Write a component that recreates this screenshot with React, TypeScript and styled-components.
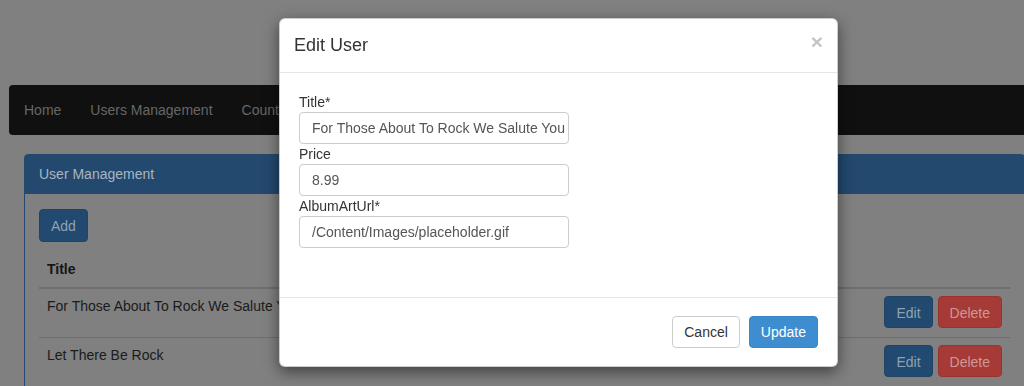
import styled, { createGlobalStyle } from 'styled-components';

const GlobalStyle = createGlobalStyle`
  html, body {
    margin: 0;
    padding: 0;
    overflow: hidden;
  }

  body {
    background: #808080;
    font-family: "Liberation Sans", Arial, Helvetica, sans-serif;
    font-size: 14px;
    line-height: 20px;
    color: #1b1b1b;
  }

  * {
    box-sizing: border-box;
  }
`;

/* page behind the backdrop, painted in its dimmed colours */
const Page = styled.div`
  width: 1040px;
  height: 386px;
  padding-top: 85px;
  background: #808080;
`;

const Navbar = styled.nav`
  display: flex;
  height: 50px;
  margin-left: 9px;
  background: #101010;
  border-radius: 4px 0 0 4px;
`;

const NavLink = styled.a`
  display: block;
  padding: 15px 14px 15px 15px;
  color: #676767;
  text-decoration: none;
`;

const Container = styled.div`
  padding: 19px 15px 0 24px;
`;

const Panel = styled.section`
  border: 1px solid #23496e;
  border-radius: 4px 4px 0 0;
`;

const PanelHeading = styled.div`
  height: 39px;
  padding: 9px 14px 10px;
  background: #23496e;
  color: #a9b5c2;
`;

const PanelBody = styled.div`
  padding: 15px 14px;
`;

const Button = styled.button<{ $variant: 'primary' | 'danger' }>`
  display: inline-block;
  height: 33px;
  padding: 6px 11px;
  border: 1px solid ${(p) => (p.$variant === 'primary' ? '#1f4465' : '#983532')};
  border-radius: 4px;
  background: ${(p) => (p.$variant === 'primary' ? '#22496f' : '#a63a37')};
  color: ${(p) => (p.$variant === 'primary' ? '#8fa2b5' : '#cf9895')};
  font: inherit;
`;

const Table = styled.table`
  width: 100%;
  margin-top: 9px;
  border-collapse: collapse;
`;

const Th = styled.th`
  padding: 8px;
  text-align: left;
  font-weight: bold;
  color: #161616;
  border-bottom: 2px solid #6e6e6e;
`;

const Td = styled.td<{ $actions?: boolean }>`
  padding: 7px 8px 9px;
  vertical-align: top;
  white-space: nowrap;
  border-top: 1px solid #6e6e6e;
  width: ${(p) => (p.$actions ? '1%' : 'auto')};
  color: #1b1b1b;
`;

const Actions = styled.div`
  display: flex;
  gap: 5px;
  margin-top: 0;
`;

const RowButton = styled(Button)`
  height: 32px;
`;

/* modal */
const Modal = styled.div`
  position: fixed;
  top: 18px;
  left: 279px;
  width: 559px;
  background: #fff;
  border: 1px solid rgba(0, 0, 0, 0.2);
  border-radius: 6px;
  box-shadow: 0 5px 15px rgba(0, 0, 0, 0.5);
  color: #333;
`;

const ModalHeader = styled.div`
  display: flex;
  justify-content: space-between;
  align-items: flex-start;
  padding: 14px;
  border-bottom: 1px solid #e5e5e5;
`;

const ModalTitle = styled.h4`
  margin: 0;
  font-size: 18px;
  font-weight: normal;
  line-height: 25px;
`;

const Close = styled.button`
  padding: 0;
  margin-top: -2px;
  border: 0;
  background: none;
  font: bold 21px/1 "Liberation Sans", Arial, sans-serif;
  color: #c4c4c4;
`;

const ModalBody = styled.div`
  padding: 19px 19px 49px;
`;

const Label = styled.label`
  display: block;
  height: 20px;
  color: #333;
`;

const Input = styled.input`
  display: block;
  width: 270px;
  height: 32px;
  padding: 6px 1px 6px 12px;
  border: 1px solid #ccc;
  border-radius: 4px;
  font: inherit;
  color: #555;
  background: #fff;
  outline: none;
`;

const ModalFooter = styled.div`
  display: flex;
  justify-content: flex-end;
  gap: 9px;
  padding: 18px 19px;
  border-top: 1px solid #e5e5e5;
`;

const FooterButton = styled.button<{ $primary?: boolean }>`
  height: 32px;
  padding: 5px 11px;
  border: 1px solid ${(p) => (p.$primary ? '#3a86c8' : '#ccc')};
  border-radius: 4px;
  background: ${(p) => (p.$primary ? '#3d8dd0' : '#fff')};
  color: ${(p) => (p.$primary ? '#fff' : '#333')};
  font: inherit;
`;

const albums = ['For Those About To Rock We Salute You', 'Let There Be Rock'];

const fields = [
  { label: 'Title*', value: 'For Those About To Rock We Salute You' },
  { label: 'Price', value: '8.99' },
  { label: 'AlbumArtUrl*', value: '/Content/Images/placeholder.gif' },
];

export default function App() {
  return (
    <>
      <GlobalStyle />
      <Page>
        <Navbar>
          <NavLink>Home</NavLink>
          <NavLink>Users Management</NavLink>
          <NavLink>Countries</NavLink>
        </Navbar>
        <Container>
          <Panel>
            <PanelHeading>User Management</PanelHeading>
            <PanelBody>
              <Button $variant="primary">Add</Button>
              <Table>
                <thead>
                  <tr>
                    <Th>Title</Th>
                    <Th />
                  </tr>
                </thead>
                <tbody>
                  {albums.map((title) => (
                    <tr key={title}>
                      <Td>{title}</Td>
                      <Td $actions>
                        <Actions>
                          <RowButton $variant="primary">Edit</RowButton>
                          <RowButton $variant="danger">Delete</RowButton>
                        </Actions>
                      </Td>
                    </tr>
                  ))}
                </tbody>
              </Table>
            </PanelBody>
          </Panel>
        </Container>
      </Page>

      <Modal>
        <ModalHeader>
          <ModalTitle>Edit User</ModalTitle>
          <Close>×</Close>
        </ModalHeader>
        <ModalBody>
          {fields.map((f) => (
            <div key={f.label}>
              <Label>{f.label}</Label>
              <Input readOnly value={f.value} />
            </div>
          ))}
        </ModalBody>
        <ModalFooter>
          <FooterButton>Cancel</FooterButton>
          <FooterButton $primary>Update</FooterButton>
        </ModalFooter>
      </Modal>
    </>
  );
}
